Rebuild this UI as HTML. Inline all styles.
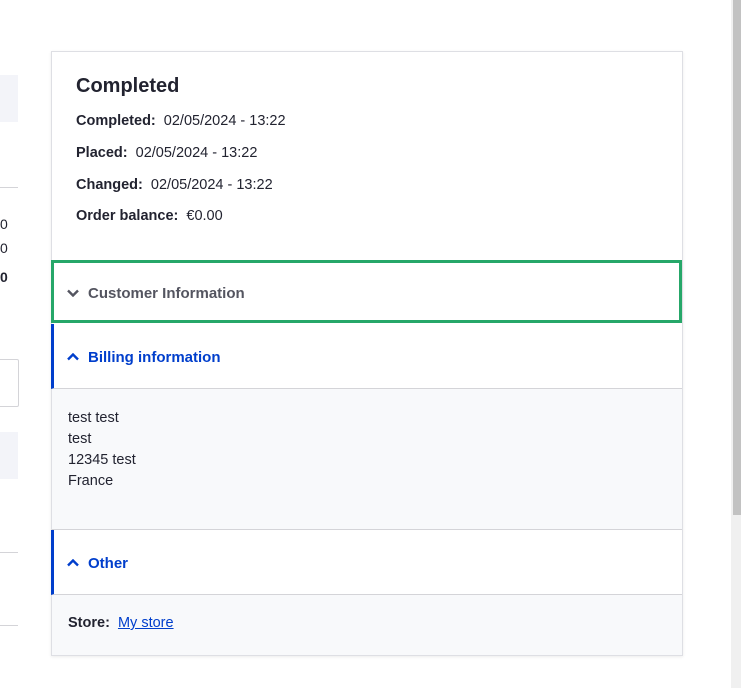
<!DOCTYPE html>
<html><head><style>
body{margin:0;width:741px;height:688px;background:#fff;font-family:"Liberation Sans",sans-serif;color:#222330;position:relative;overflow:hidden}
.a{position:absolute}
.card{left:51px;top:51px;width:630px;height:603px;border:1px solid #dedfe4;box-shadow:0 1px 3px rgba(0,0,0,.08);background:#fff}
.lbl{font-weight:bold}
.row{position:absolute;left:24px;font-size:14.5px}
.hd{position:absolute;left:0;width:630px;font-weight:bold;font-size:15px}
.chev{position:absolute;left:13px;width:12px;height:8px}
</style></head><body>
<div class="a" style="left:0;top:75px;width:18px;height:47px;background:#f3f4f9"></div>
<div class="a" style="left:0;top:187px;width:18px;height:1px;background:#d4d4d8"></div>
<div class="a" style="left:0;top:216px;font-size:14px">0</div>
<div class="a" style="left:0;top:240px;font-size:14px">0</div>
<div class="a" style="left:0;top:269px;font-size:14px;font-weight:bold">0</div>
<div class="a" style="left:-4px;top:359px;width:21px;height:46px;border:1px solid #d4d4d8;border-radius:2px;background:#fff"></div>
<div class="a" style="left:0;top:432px;width:18px;height:47px;background:#f3f4f9"></div>
<div class="a" style="left:0;top:552px;width:18px;height:1px;background:#d4d4d8"></div>
<div class="a" style="left:0;top:625px;width:18px;height:1px;background:#d4d4d8"></div>

<div class="a card">
<div class="row" style="top:23px;font-size:20px;font-weight:bold">Completed</div>
<div class="row" style="top:61px"><span class="lbl">Completed:</span>&nbsp; 02/05/2024 - 13:22</div>
<div class="row" style="top:93px"><span class="lbl">Placed:</span>&nbsp; 02/05/2024 - 13:22</div>
<div class="row" style="top:125px"><span class="lbl">Changed:</span>&nbsp; 02/05/2024 - 13:22</div>
<div class="row" style="top:156px"><span class="lbl">Order balance:</span>&nbsp; €0.00</div>

<div class="hd" style="top:208px;height:57px;border:3px solid #26a769;left:-1px;width:625px;color:#545560">
<svg class="chev" style="top:26px" viewBox="0 0 12 8"><path d="M1 1.5L6 6.5L11 1.5" fill="none" stroke="#545560" stroke-width="2.4"/></svg>
<span style="position:absolute;left:34px;top:22px">Customer Information</span></div>

<div class="hd" style="top:272px;height:64px;border-left:3px solid #003ecc;left:-1px;width:628px;border-bottom:1px solid #d4d4d8;color:#003ecc">
<svg class="chev" style="top:29px" viewBox="0 0 12 8"><path d="M1 6.5L6 1.5L11 6.5" fill="none" stroke="#003ecc" stroke-width="2.4"/></svg>
<span style="position:absolute;left:34px;top:25px">Billing information</span></div>
<div class="a" style="left:0;top:337px;width:630px;height:140px;background:#f8f9fb;border-bottom:1px solid #d4d4d8"></div>
<div class="row" style="top:356px;left:16px;font-size:14.5px;line-height:21px">test test<br>test<br>12345 test<br>France</div>

<div class="hd" style="top:478px;height:64px;border-left:3px solid #003ecc;left:-1px;width:628px;border-bottom:1px solid #d4d4d8;color:#003ecc">
<svg class="chev" style="top:29px" viewBox="0 0 12 8"><path d="M1 6.5L6 1.5L11 6.5" fill="none" stroke="#003ecc" stroke-width="2.4"/></svg>
<span style="position:absolute;left:34px;top:25px">Other</span></div>
<div class="a" style="left:0;top:543px;width:630px;height:60px;background:#f8f9fb"></div>
<div class="row" style="top:563px;left:16px"><span class="lbl">Store:</span>&nbsp; <span style="color:#003ecc;text-decoration:underline">My store</span></div>
</div>

<div class="a" style="left:731px;top:0;width:10px;height:688px;background:#f0f0f0"></div>
<div class="a" style="left:733px;top:0;width:8px;height:515px;background:#c2c2c2"></div>
</body></html>
